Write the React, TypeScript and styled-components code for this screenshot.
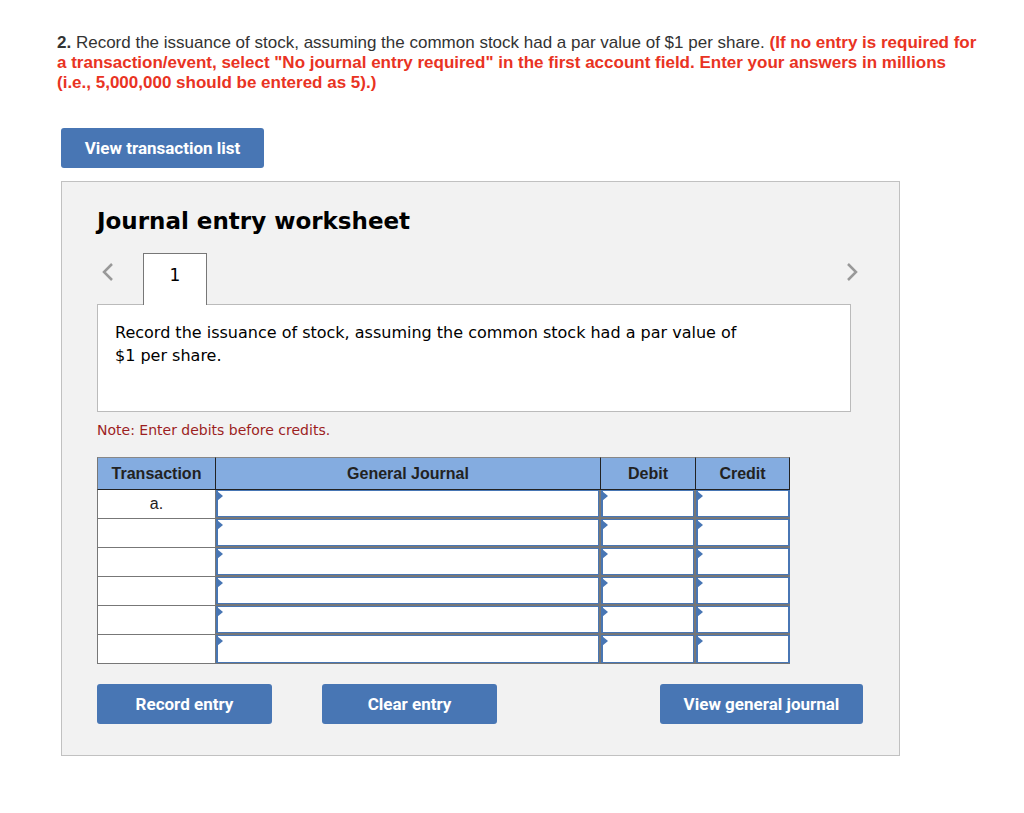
import React from "react";
import styled, { createGlobalStyle } from "styled-components";

const GlobalStyle = createGlobalStyle`
  *, *::before, *::after { box-sizing: border-box; }
  body { margin: 0; background: #fff; }
`;

const verdana = `Verdana, "DejaVu Sans", sans-serif`;
const arial = `"Liberation Sans", Arial, sans-serif`;

const Page = styled.main`
  padding: 33px 0 56px;
`;

const Question = styled.p`
  margin: 0 0 35px;
  padding: 0 8px 0 57px;
  font: 17px/20px ${arial};
  color: #333;
`;

const Instruction = styled.strong`
  color: #e93323;
`;

const Content = styled.div`
  display: flex;
  flex-direction: column;
  align-items: flex-start;
  gap: 13px;
  padding: 0 124px 0 61px;
`;

const Button = styled.button<{ $wide?: boolean }>`
  width: ${(p) => (p.$wide ? 203 : 175)}px;
  height: 40px;
  padding: 0;
  border: 0;
  border-radius: 3px;
  background: #4876b4;
  color: #fff;
  font: 700 17px/20px Roboto, sans-serif;
  cursor: pointer;
`;

const Panel = styled.section`
  width: 100%;
  padding: 23px 36px 31px 35px;
  border: 1px solid #c1c1c1;
  background: #f2f2f2;
`;

const Title = styled.h2`
  margin: 0 0 16px;
  font: 700 23px/32px ${verdana};
  color: #000;
`;

const TabRow = styled.div`
  display: flex;
  align-items: flex-start;
  margin-bottom: -1px;
  padding: 0 4px;
`;

const Arrow = styled.button<{ $end?: boolean }>`
  display: flex;
  margin: 9px 0 0 ${(p) => (p.$end ? "auto" : "0")};
  padding: 0;
  border: 0;
  background: none;
  cursor: pointer;
`;

const Tab = styled.button`
  position: relative;
  width: 64px;
  height: 52px;
  margin-left: 29px;
  padding: 0 0 10px;
  border: 1px solid #777;
  border-bottom: 0;
  background: #fff;
  font: 17px/20px ${verdana};
  color: #000;
`;

const Description = styled.div`
  height: 108px;
  margin-right: 12px;
  padding: 16px 94px 0 17px;
  border: 1px solid #bbb;
  background: #fff;
  font: 16px/23px ${verdana};
  color: #000;
`;

const Note = styled.p`
  margin: 8px 0 17px;
  font: 14px/20px ${verdana};
  color: #9c1f1f;
`;

const TableWrap = styled.div`
  padding-right: 73px;
`;

const Journal = styled.table`
  width: 100%;
  table-layout: fixed;
  border-collapse: separate;
  border-spacing: 0;
  background: #fff;
  font: 16px/20px ${arial};
  color: #222;
`;

const HeadCell = styled.th<{ $width?: number }>`
  width: ${(p) => (p.$width ? `${p.$width}px` : "auto")};
  height: 33px;
  padding: 0;
  border: solid #222;
  border-width: 1px 1px 1px 0;
  border-top-color: #888;
  background: #84ace0;
  font-weight: 700;

  &:first-child { border-left: 1px solid #777; }
`;

const LabelCell = styled.td`
  height: 29px;
  padding: 0;
  border: solid #777;
  border-width: 0 1px 1px 1px;
  text-align: center;
`;

const EntryCell = styled.td`
  position: relative;
  height: 29px;
  padding: 0;
  border: solid #777;
  border-width: 0 2px 2px 0;

  &:last-child { border-right-width: 0; }
  tr:last-child > & { border-bottom-width: 1px; }

  &::before {
    content: "";
    position: absolute;
    top: 1px;
    left: 1px;
    border: solid transparent;
    border-width: 5px 0 5px 6px;
    border-left-color: #4876b4;
  }
`;

const EntryInput = styled.input`
  display: block;
  width: 100%;
  height: 27px;
  padding: 0 8px;
  border: 1px solid #4876b4;
  border-left-width: 2px;
  border-radius: 0;
  outline: 0;
  background: #fff;
  font: 16px/20px ${arial};

  td:last-child > & { border-right-width: 2px; }
  tr:last-child & { height: 28px; }
`;

const Actions = styled.div`
  display: flex;
  gap: 50px;
  margin-top: 20px;

  & > :last-child { margin-left: auto; }
`;

const Chevron = ({ points }: { points: string }) => (
  <svg width="13" height="20" viewBox="0 0 13 20" fill="none" stroke="#999" strokeWidth="2.5" aria-hidden="true">
    <polyline points={points} />
  </svg>
);

const rows = ["a.", "", "", "", "", ""];
const fields = ["General Journal", "Debit", "Credit"];

export default function App() {
  return (
    <Page>
      <GlobalStyle />
      <Question>
        <strong>2.</strong> Record the issuance of stock, assuming the common stock had a par value of $1 per share.{" "}
        <Instruction>
          (If no entry is required for
          <br />a transaction/event, select "No journal entry required" in the first account field. Enter your answers
          in millions
          <br />
          (i.e., 5,000,000 should be entered as 5).)
        </Instruction>
      </Question>
      <Content>
        <Button $wide>View transaction list</Button>
        <Panel>
          <Title>Journal entry worksheet</Title>
          <TabRow>
            <Arrow aria-label="Previous entry"><Chevron points="11,2 3,10 11,18" /></Arrow>
            <Tab>1</Tab>
            <Arrow $end aria-label="Next entry"><Chevron points="2,2 10,10 2,18" /></Arrow>
          </TabRow>
          <Description>
            Record the issuance of stock, assuming the common stock had a par value of $1 per share.
          </Description>
          <Note>Note: Enter debits before credits.</Note>
          <TableWrap>
            <Journal>
              <thead>
                <tr>
                  <HeadCell $width={119}>Transaction</HeadCell>
                  <HeadCell>General Journal</HeadCell>
                  <HeadCell $width={95}>Debit</HeadCell>
                  <HeadCell $width={94}>Credit</HeadCell>
                </tr>
              </thead>
              <tbody>
                {rows.map((label, i) => (
                  <tr key={i}>
                    <LabelCell>{label}</LabelCell>
                    {fields.map((field) => (
                      <EntryCell key={field}>
                        <EntryInput type="text" aria-label={`${field}, row ${i + 1}`} />
                      </EntryCell>
                    ))}
                  </tr>
                ))}
              </tbody>
            </Journal>
          </TableWrap>
          <Actions>
            <Button>Record entry</Button>
            <Button>Clear entry</Button>
            <Button $wide>View general journal</Button>
          </Actions>
        </Panel>
      </Content>
    </Page>
  );
}
